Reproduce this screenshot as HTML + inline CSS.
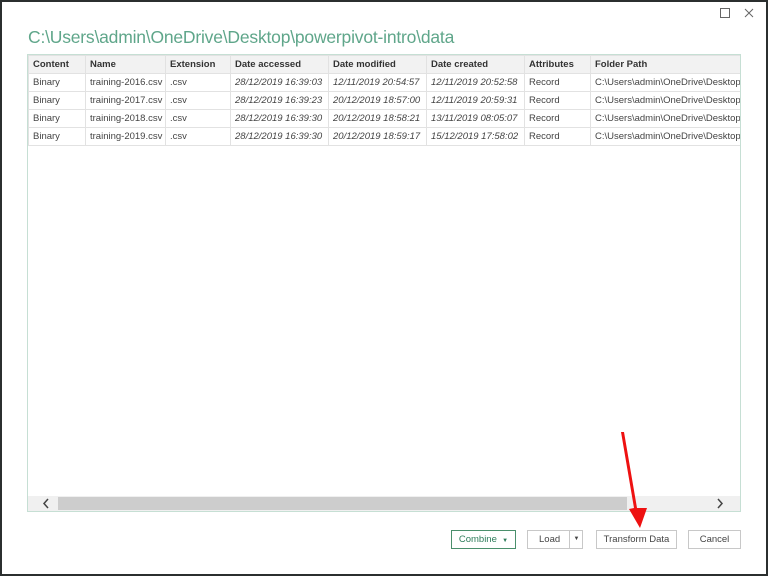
<!DOCTYPE html>
<html><head><meta charset="utf-8"><style>
*{margin:0;padding:0;box-sizing:border-box}
body{width:768px;height:576px;background:#fff;position:relative;overflow:hidden;font-family:"Liberation Sans",sans-serif;}
.frame{position:absolute;left:0;top:0;width:768px;height:576px;border:2px solid #2b2f2f}
.title{position:absolute;left:28px;top:27px;font-size:17.5px;color:#5fa68a;letter-spacing:-0.2px}
.box{position:absolute;left:27px;top:54px;width:714px;height:458px;border:1px solid #c6dfd4}
.tw{position:absolute;left:28px;top:55px;width:712px;height:92px;overflow:hidden}
table{border-collapse:collapse;font-size:9.5px;color:#444;table-layout:fixed;width:800px}
td,th{height:18px;border:1px solid #e2e2e2;padding:0 4px;white-space:nowrap;overflow:hidden;text-align:left}
th{background:#f2f2f2;font-weight:bold;color:#333}
td.i{font-style:italic}
.sb{position:absolute;left:28px;top:496px;width:712px;height:15px;background:#f0f0f0}
.thumb{position:absolute;left:58px;top:497px;width:569px;height:13px;background:#cdcdcd}
.btn{position:absolute;top:530px;height:19px;border:1px solid #c8c8c8;font-size:9.5px;color:#444;text-align:center;line-height:17px;background:#fff}
</style></head><body>
<div class="frame"></div>
<div style="position:absolute;left:720px;top:8px;width:10px;height:10px;border:1px solid #666"></div>
<svg style="position:absolute;left:744px;top:8px" width="10" height="10"><path d="M1 1L9 9M9 1L1 9" stroke="#666" stroke-width="1"/></svg>
<div class="title">C:\Users\admin\OneDrive\Desktop\powerpivot-intro\data</div>
<div class="box"></div>
<div class="tw">
<table>
<colgroup><col style="width:57px"><col style="width:80px"><col style="width:65px"><col style="width:98px"><col style="width:98px"><col style="width:98px"><col style="width:66px"><col style="width:238px"></colgroup>
<tr><th>Content</th><th>Name</th><th>Extension</th><th>Date accessed</th><th>Date modified</th><th>Date created</th><th>Attributes</th><th>Folder Path</th></tr>
<tr><td>Binary</td><td>training-2016.csv</td><td>.csv</td><td class="i">28/12/2019 16:39:03</td><td class="i">12/11/2019 20:54:57</td><td class="i">12/11/2019 20:52:58</td><td>Record</td><td>C:\Users\admin\OneDrive\Desktop\powerpivot-intro</td></tr>
<tr><td>Binary</td><td>training-2017.csv</td><td>.csv</td><td class="i">28/12/2019 16:39:23</td><td class="i">20/12/2019 18:57:00</td><td class="i">12/11/2019 20:59:31</td><td>Record</td><td>C:\Users\admin\OneDrive\Desktop\powerpivot-intro</td></tr>
<tr><td>Binary</td><td>training-2018.csv</td><td>.csv</td><td class="i">28/12/2019 16:39:30</td><td class="i">20/12/2019 18:58:21</td><td class="i">13/11/2019 08:05:07</td><td>Record</td><td>C:\Users\admin\OneDrive\Desktop\powerpivot-intro</td></tr>
<tr><td>Binary</td><td>training-2019.csv</td><td>.csv</td><td class="i">28/12/2019 16:39:30</td><td class="i">20/12/2019 18:59:17</td><td class="i">15/12/2019 17:58:02</td><td>Record</td><td>C:\Users\admin\OneDrive\Desktop\powerpivot-intro</td></tr>
</table></div>
<div class="sb"></div><div class="thumb"></div>
<svg style="position:absolute;left:0;top:0" width="768" height="576">
<path d="M48 499 L44 503.5 L48 508" stroke="#444" stroke-width="1.5" fill="none"/>
<path d="M718 499 L722 503.5 L718 508" stroke="#444" stroke-width="1.5" fill="none"/>
<polygon points="621,432 624,432 637,508 647,508 640,528 629,509 634,508" fill="#ee1111"/>
</svg>
<div class="btn" style="left:451px;width:65px;border-color:#4a8f6c;color:#2e7d5b">Combine &nbsp;<span style="font-size:6px">▼</span></div>
<div class="btn" style="left:527px;width:56px;text-align:left;padding-left:11px">Load<span style="position:absolute;left:41px;top:0;height:17px;border-left:1px solid #c8c8c8;width:14px;font-size:6px;text-align:center">▼</span></div>
<div class="btn" style="left:596px;width:81px">Transform Data</div>
<div class="btn" style="left:688px;width:53px">Cancel</div>
</body></html>
